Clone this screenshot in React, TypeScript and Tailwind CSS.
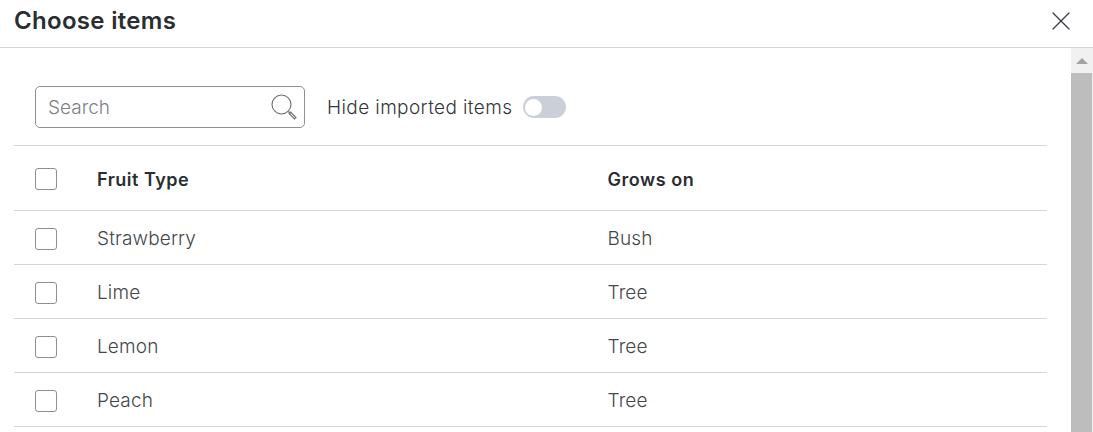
import { X } from "lucide-react";

const rows = [
  ["Strawberry", "Bush"],
  ["Lime", "Tree"],
  ["Lemon", "Tree"],
  ["Peach", "Tree"],
];

function Box() {
  return <div className="h-[22px] w-[22px] shrink-0 rounded-[3px] border border-[#8c9096] bg-white" />;
}

export default function App() {
  return (
    <div className="flex h-[432px] w-[1093px] flex-col overflow-hidden bg-white font-['Inter',sans-serif] text-[#2b2f33]">
      <header className="flex h-[48px] shrink-0 items-center justify-between border-b border-[#d4d6d8] pb-[6px] pl-[14px] pr-[16px]">
        <h2 className="text-[24px] font-semibold leading-[28px] tracking-[0.3px] text-[#2a2e33]">Choose items</h2>
        <X className="h-[32px] w-[32px] text-[#3a3d42]" strokeWidth={0.95} />
      </header>

      <div className="flex min-h-0 flex-1">
        <main className="min-w-0 flex-1 pl-[14px] pr-[24px]">
          <div className="flex h-[98px] items-start gap-[22px] border-b border-[#d4d6d8] pl-[21px] pt-[38px]">
            <div className="flex h-[42px] w-[270px] items-center justify-between rounded-[5px] border border-[#8c9096] pl-[12px] pr-[5px]">
              <span className="pt-[3px] text-[19px] font-light text-[#7d8185]">Search</span>
              <svg width="30" height="30" viewBox="0 0 30 30" fill="none" stroke="#6b6f73">
                <circle cx="12.5" cy="12.5" r="9.5" strokeWidth="1.1" />
                <path d="M19.5 19.5 L21.5 21.5" strokeWidth="1.1" />
                <path d="M21.5 20 L27 25.5 L25.5 27 L20 21.5 Z" strokeWidth="1.1" />
              </svg>
            </div>
            <div className="flex h-[42px] items-center gap-[11px]">
              <span className="pt-[2px] text-[19px] font-light tracking-[0.4px] text-[#33373c]">Hide imported items</span>
              <div className="flex h-[22px] w-[43px] items-center rounded-full bg-[#cbd0d8] pl-[2px]">
                <div className="h-[17px] w-[17px] rounded-full bg-white" />
              </div>
            </div>
          </div>

          <div className="flex h-[65px] items-center border-b border-[#d4d6d8] pl-[21px] pt-[2px]">
            <Box />
            <div className="ml-[40px] w-[510.5px] text-[18px] font-semibold tracking-[0.5px] text-[#2a2e33]">Fruit Type</div>
            <div className="text-[18px] font-semibold tracking-[0.55px] text-[#2a2e33]">Grows on</div>
          </div>

          {rows.map(([name, grows]) => (
            <div key={name} className="flex h-[54px] items-center border-b border-[#d4d6d8] pl-[21px] pt-[2px]">
              <Box />
              <div className="ml-[40px] w-[510.5px] pt-[2px] text-[19px] font-light tracking-[0.15px] text-[#44484c]">{name}</div>
              <div className="pt-[2px] text-[19px] font-light tracking-[0.15px] text-[#44484c]">{grows}</div>
            </div>
          ))}
        </main>

        <aside className="flex w-[22px] shrink-0 flex-col bg-[#f1f1f1]">
          <div className="flex h-[25px] shrink-0 items-center justify-center">
            <div className="h-0 w-0 border-x-[6px] border-b-[6px] border-x-transparent border-b-[#a3a3a3]" />
          </div>
          <div className="flex-1 pr-px">
            <div className="h-full bg-[#bdbdbd]" />
          </div>
        </aside>
      </div>
    </div>
  );
}
